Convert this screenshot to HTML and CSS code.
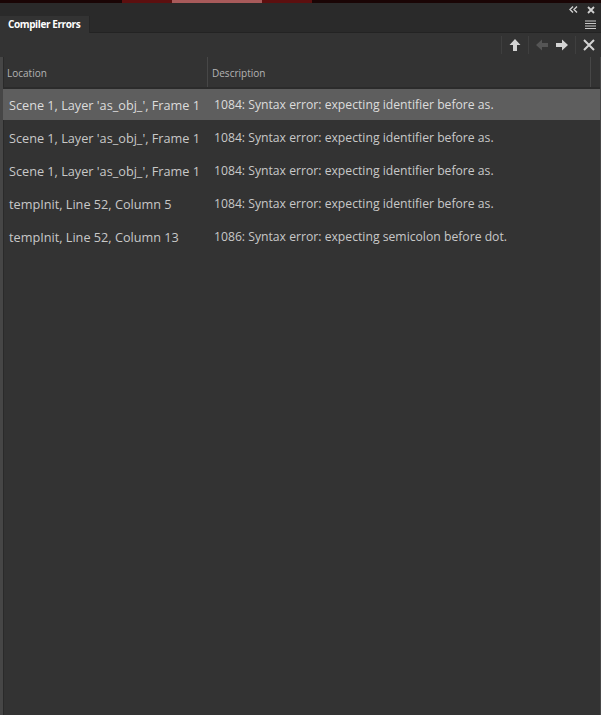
FILE: index.html
```html
<!DOCTYPE html>
<html>
<head>
<meta charset="utf-8">
<link rel="stylesheet" href="styles.css">
</head>
<body>
<div class="app">
  <div class="topstrip">
    <div class="red-a"></div>
    <div class="red-b"></div>
    <div class="red-c"></div>
  </div>
  <div class="titlebar">
    <svg class="ico" width="9" height="7" viewBox="0 0 9 7"><path d="M4 0.5 L1 3.5 L4 6.5 M8 0.5 L5 3.5 L8 6.5" stroke="#d0d0d0" stroke-width="1.4" fill="none"/></svg>
    <svg class="ico" width="8" height="8" viewBox="0 0 8 8"><path d="M1 1 L7 7 M7 1 L1 7" stroke="#d0d0d0" stroke-width="1.8"/></svg>
  </div>
  <div class="tabbar">
    <div class="tab">Compiler Errors</div>
    <div class="tabrest">
      <svg class="menu" width="11" height="9" viewBox="0 0 11 9"><path d="M0 1h11M0 3.5h11M0 6h11M0 8.5h11" stroke="#c8c8c8" stroke-width="1"/></svg>
    </div>
  </div>
  <div class="toolbar">
    <span class="sep"></span>
    <svg class="tb" width="14" height="14" viewBox="0 0 14 14"><path d="M7 1 L12.5 7 H9 V13 H5 V7 H1.5 Z" fill="#d4d4d4"/></svg>
    <span class="sep"></span>
    <svg class="tb" width="14" height="14" viewBox="0 0 14 14"><path d="M1 7 L7 1.5 V5 H13 V9 H7 V12.5 Z" fill="#555"/></svg>
    <svg class="tb" width="14" height="14" viewBox="0 0 14 14"><path d="M13 7 L7 1.5 V5 H1 V9 H7 V12.5 Z" fill="#d4d4d4"/></svg>
    <span class="sep"></span>
    <svg class="tb" width="14" height="14" viewBox="0 0 14 14"><path d="M2 2 L12 12 M12 2 L2 12" stroke="#d4d4d4" stroke-width="2"/></svg>
  </div>
  <div class="panel">
    <div class="header">
      <div class="col-loc">Location</div>
      <div class="col-desc">Description</div>
      <div class="col-end"></div>
    </div>
    <div class="rows">
      <div class="row selected"><div class="c-loc">Scene 1, Layer 'as_obj_', Frame 1</div><div class="c-desc">1084: Syntax error: expecting identifier before as.</div></div>
      <div class="row"><div class="c-loc">Scene 1, Layer 'as_obj_', Frame 1</div><div class="c-desc">1084: Syntax error: expecting identifier before as.</div></div>
      <div class="row"><div class="c-loc">Scene 1, Layer 'as_obj_', Frame 1</div><div class="c-desc">1084: Syntax error: expecting identifier before as.</div></div>
      <div class="row"><div class="c-loc">tempInit, Line 52, Column 5</div><div class="c-desc">1084: Syntax error: expecting identifier before as.</div></div>
      <div class="row"><div class="c-loc">tempInit, Line 52, Column 13</div><div class="c-desc">1086: Syntax error: expecting semicolon before dot.</div></div>
    </div>
  </div>
</div>
</body>
</html>
```
FILE: styles.css
```css
html, body {
  margin: 0;
  padding: 0;
  background: #333333;
}
.app {
  width: 601px;
  height: 715px;
  display: flex;
  flex-direction: column;
  font-family: "Open Sans", "Noto Sans", sans-serif;
  overflow: hidden;
}
.topstrip {
  height: 3px;
  background: #1a0505;
  display: flex;
  flex-shrink: 0;
}
.red-a { margin-left: 122px; width: 50px; background: #5c0f0f; }
.red-b { width: 90px; background: #a85a5a; }
.red-c { width: 50px; background: #5c0f0f; }
.titlebar {
  height: 13px;
  background: #2a2a2a;
  display: flex;
  align-items: center;
  justify-content: flex-end;
  gap: 9px;
  padding-right: 6px;
  flex-shrink: 0;
}
.ico { display: block; }
.tabbar {
  height: 17px;
  display: flex;
  flex-shrink: 0;
  background: #2a2a2a;
}
.tab {
  width: 81px;
  padding-left: 8px;
  background: #333333;
  border-right: 1px solid #262626;
  color: #ffffff;
  font-weight: 700;
  font-size: 10px;
  line-height: 17px;
  letter-spacing: -0.4px;
}
.tabrest {
  flex: 1;
  border-bottom: 1px solid #232323;
  display: flex;
  justify-content: flex-end;
  align-items: center;
  padding-right: 5px;
}
.menu { display: block; }
.toolbar {
  height: 24px;
  display: flex;
  align-items: center;
  justify-content: flex-end;
  gap: 6px;
  padding-right: 5px;
  flex-shrink: 0;
}
.sep {
  width: 1px;
  height: 18px;
  background: #3f3f3f;
}
.tb { display: block; }
.panel {
  flex: 1;
  border-left: 3px solid #464646;
  border-right: 1px solid #474747;
  box-shadow: inset 1px 0 0 #2a2a2a;
  display: flex;
  flex-direction: column;
}
.header {
  height: 30px;
  display: flex;
  align-items: center;
  color: #b4b4b4;
  font-size: 10px;
  border-bottom: 2px solid #2b2b2b;
}
.col-loc {
  width: 205px;
  padding-left: 4px;
  height: 100%;
  display: flex;
  align-items: center;
  border-right: 1px solid #474747;
  box-sizing: border-box;
  padding-top: 1px;
}
.col-desc {
  width: 383px;
  padding-left: 4px;
  height: 100%;
  display: flex;
  align-items: center;
  border-right: 1px solid #474747;
  padding-top: 1px;
  box-sizing: border-box;
}
.col-end { flex: 1; }
.rows { display: flex; flex-direction: column; }
.row {
  height: 33px;
  display: flex;
  align-items: center;
  color: #c8c8c8;
}
.row.selected {
  height: 31px;
  margin-bottom: 1px;
  background: #5e5e5e;
  color: #dcdcdc;
}
.c-loc { width: 205px; padding-left: 6px; box-sizing: border-box; white-space: nowrap; font-size: 12.7px; }
.c-desc { padding-left: 6px; white-space: nowrap; font-size: 12.2px; }
```
